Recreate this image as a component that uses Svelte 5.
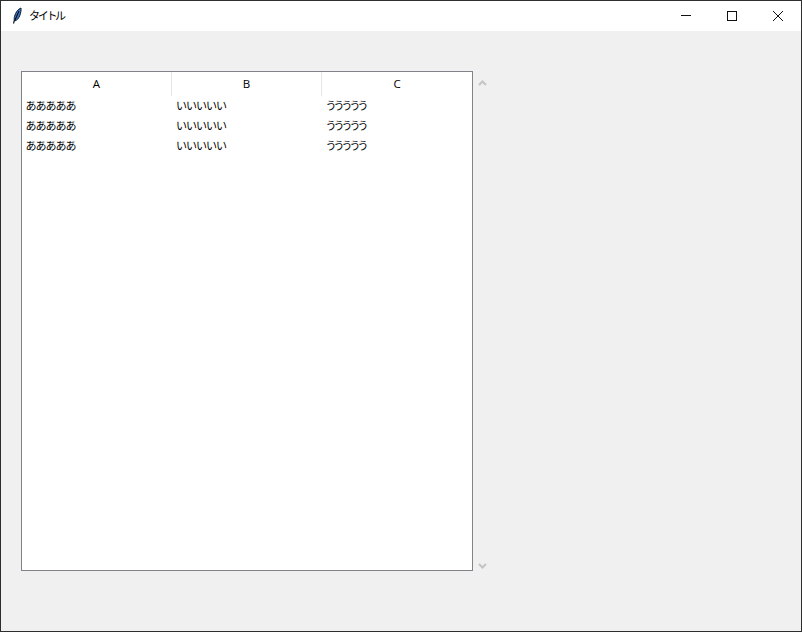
<script>
  const columns = ['A', 'B', 'C'];
  const rows = [
    ['あああああ', 'いいいいい', 'ううううう'],
    ['あああああ', 'いいいいい', 'ううううう'],
    ['あああああ', 'いいいいい', 'ううううう']
  ];
</script>

<div class="window">
  <header class="titlebar">
    <div class="title">
      <svg class="feather" width="16" height="18" viewBox="0 0 16 18">
        <path d="M12 1C9 2 6.500 5.500 5.500 9.500c-.4 1.600-.4 3.500 0 4.500 2.500-.5 4.500-3 5.500-6 .7-2.200 1.300-5 1-7z" fill="#3f78c8" stroke="#0c1c34" stroke-width="1"/>
        <path d="M10 4 6 13M5.300 13.500 4.500 16.500" fill="none" stroke="#050a14" stroke-width="1.100"/>
      </svg>
      <span>タイトル</span>
    </div>
    <div class="controls">
      <div class="control">
        <svg width="12" height="12" viewBox="0 0 12 12"><path d="M1 5.500h10" stroke="#111" fill="none"/></svg>
      </div>
      <div class="control">
        <svg width="12" height="12" viewBox="0 0 12 12"><rect x="1.500" y="1.500" width="9" height="9" stroke="#111" fill="none"/></svg>
      </div>
      <div class="control">
        <svg width="12" height="12" viewBox="0 0 12 12"><path d="M1 1l10 10M11 1L1 11" stroke="#111" fill="none"/></svg>
      </div>
    </div>
  </header>

  <main class="content">
    <div class="tree">
      <div class="head">
        {#each columns as col}
          <div class="head-cell">{col}</div>
        {/each}
      </div>
      {#each rows as row}
        <div class="row">
          {#each row as cell}
            <div class="cell">{cell}</div>
          {/each}
        </div>
      {/each}
    </div>
    <div class="scrollbar">
      <svg width="9" height="6" viewBox="0 0 9 6"><path d="M1 5l3.500-3.500L8 5" fill="none" stroke="#c4c4c4" stroke-width="2"/></svg>
      <svg width="9" height="6" viewBox="0 0 9 6"><path d="M1 1l3.500 3.500L8 1" fill="none" stroke="#c4c4c4" stroke-width="2"/></svg>
    </div>
  </main>
</div>

<style>
  :global(body) {
    margin: 0;
    font-family: "Noto Sans CJK JP", "Liberation Sans", sans-serif;
    background: #f0f0f0;
  }

  .window {
    width: 802px;
    height: 632px;
    box-sizing: border-box;
    border: 1px solid #2e2e2e;
    display: flex;
    flex-direction: column;
    background: #f0f0f0;
    overflow: hidden;
  }

  .titlebar {
    height: 30px;
    flex: none;
    background: #ffffff;
    display: flex;
    justify-content: space-between;
    align-items: center;
  }

  .title {
    display: flex;
    align-items: center;
    gap: 4px;
    padding-left: 8px;
    font-size: 11px;
    letter-spacing: -2.300px;
    line-height: 28px;
    color: #000;
  }

  .title span {
    position: relative;
    top: -1px;
  }

  .controls {
    display: flex;
    height: 100%;
  }

  .control {
    width: 46px;
    display: flex;
    align-items: center;
    justify-content: center;
  }

  .content {
    flex: 1;
    display: flex;
    align-items: flex-start;
    padding: 40px 0 0 20px;
  }

  .tree {
    width: 452px;
    height: 500px;
    box-sizing: border-box;
    border: 1px solid #82828a;
    background: #ffffff;
  }

  .head {
    display: flex;
    height: 24px;
  }

  .head-cell {
    width: 150px;
    box-sizing: border-box;
    border-right: 1px solid #e5e5e5;
    text-align: center;
    font-family: "Open Sans", "Liberation Sans", sans-serif;
    font-size: 11.500px;
    line-height: 24px;
    color: #000;
  }

  .head-cell:last-child {
    border-right: none;
  }

  .row {
    display: flex;
    height: 20px;
  }

  .cell {
    width: 150px;
    padding-left: 4px;
    box-sizing: border-box;
    font-size: 11px;
    letter-spacing: -1px;
    line-height: 19px;
    color: #000;
  }

  .cell:first-child {
    padding-left: 3.500px;
  }

  .cell:last-child {
    padding-left: 3.500px;
    letter-spacing: -3px;
  }

  .scrollbar {
    width: 18px;
    height: 500px;
    flex: none;
    display: flex;
    flex-direction: column;
    justify-content: space-between;
    align-items: center;
    box-sizing: border-box;
    padding: 9px 0 2px;
  }
</style>
